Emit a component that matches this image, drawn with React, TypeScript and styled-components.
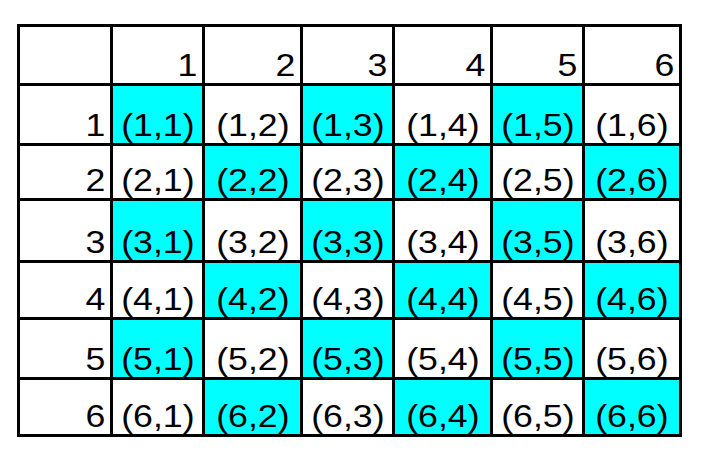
import React from "react";
import styled, { createGlobalStyle } from "styled-components";

const GlobalStyle = createGlobalStyle`
  html, body {
    margin: 0;
    padding: 0;
    background: #ffffff;
  }
  body {
    font-family: "Liberation Sans", Arial, sans-serif;
  }
`;

const Page = styled.div`
  width: 702px;
  height: 467px;
  padding: 24px 0 0 17px;
  box-sizing: border-box;
`;

const Grid = styled.div`
  display: inline-grid;
  grid-template-columns: 90px 89px 95px 89px 95px 89px 94px;
  grid-template-rows: 56px 57px 52px 59px 54px 57px 54px;
  gap: 3px;
  padding: 3px;
  background: #000000;
`;

const Cell = styled.div<{ $cyan?: boolean; $header?: boolean }>`
  background: ${(p) => (p.$cyan ? "#00ffff" : "#ffffff")};
  display: flex;
  align-items: flex-end;
  justify-content: ${(p) => (p.$header ? "flex-end" : "center")};
  padding: 0 ${(p) => (p.$header ? "5px" : "0")} 2px 0;
  overflow: hidden;
`;

const Label = styled.span<{ $header?: boolean }>`
  display: inline-block;
  font-size: 31px;
  line-height: 1;
  color: #000000;
  white-space: nowrap;
  transform: scaleX(1.15);
  transform-origin: ${(p) => (p.$header ? "right bottom" : "center bottom")};
`;

const N = [1, 2, 3, 4, 5, 6];

export default function App() {
  return (
    <>
      <GlobalStyle />
      <Page>
        <Grid>
          <Cell $header />
          {N.map((c) => (
            <Cell key={`h${c}`} $header>
              <Label $header>{c}</Label>
            </Cell>
          ))}
          {N.map((r) => (
            <React.Fragment key={`r${r}`}>
              <Cell $header>
                <Label $header>{r}</Label>
              </Cell>
              {N.map((c) => (
                <Cell key={`c${r}-${c}`} $cyan={(r + c) % 2 === 0}>
                  <Label>{`(${r},${c})`}</Label>
                </Cell>
              ))}
            </React.Fragment>
          ))}
        </Grid>
      </Page>
    </>
  );
}
